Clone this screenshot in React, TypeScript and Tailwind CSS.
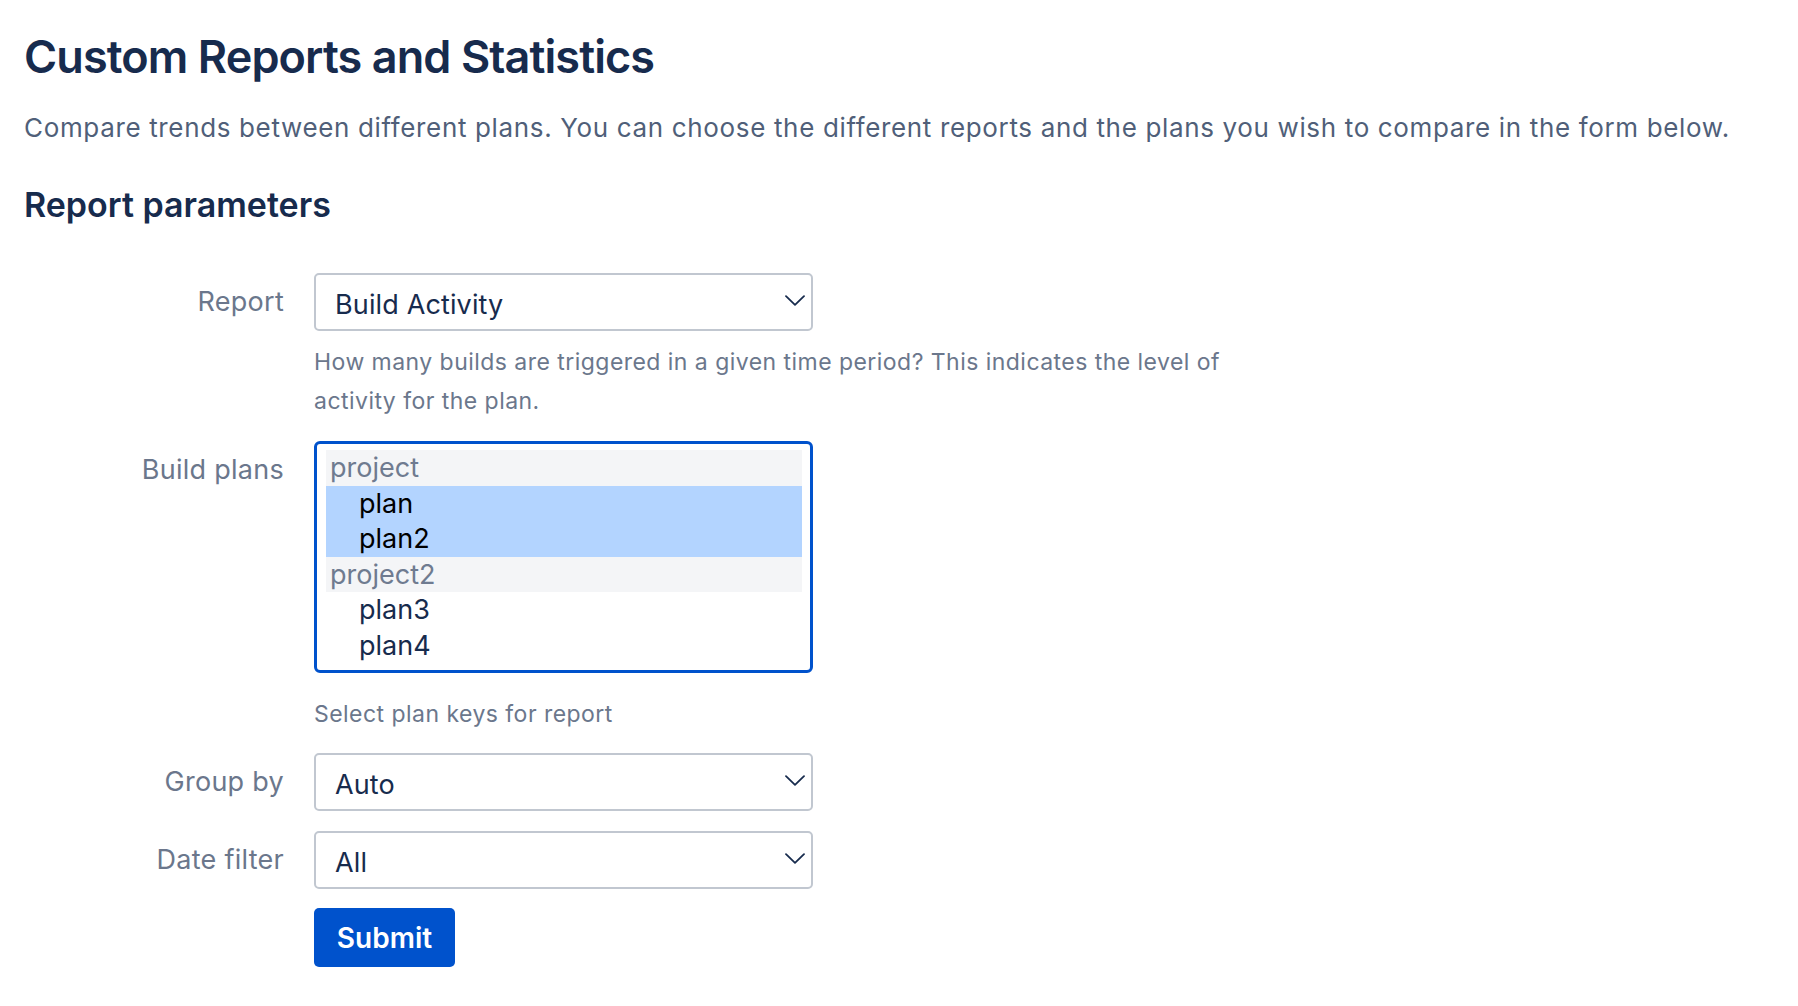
// ─── Types ────────────────────────────────────────────────────────────────────

interface PlanGroup {
  project: string;
  plans: { key: string; selected: boolean }[];
}

// ─── Constants ─────────────────────────────────────────────────────────────────

const groups: PlanGroup[] = [
  {
    project: 'project',
    plans: [
      { key: 'plan', selected: true },
      { key: 'plan2', selected: true },
    ],
  },
  {
    project: 'project2',
    plans: [
      { key: 'plan3', selected: false },
      { key: 'plan4', selected: false },
    ],
  },
];

// ─── Sub-components ────────────────────────────────────────────────────────────

function FieldLabel({ children }: { children: React.ReactNode }) {
  return (
    <div className="w-[260px] shrink-0 text-right text-[27px] leading-[58px] tracking-[0.01em] text-[#6b778c]">
      {children}
    </div>
  );
}

function Chevron() {
  return (
    <svg width="20" height="11" viewBox="0 0 20 11" fill="none" className="mb-[10px]">
      <path d="M1 1.2 10 9.8 19 1.2" stroke="#172b4d" strokeWidth="1.8" strokeLinecap="round" strokeLinejoin="round" />
    </svg>
  );
}

function SelectBox({ value }: { value: string }) {
  return (
    <div className="flex h-[58px] w-[499px] items-center justify-between rounded-[5px] border-2 border-[#c1c7d0] bg-white pt-[6px] pl-[19px] pr-[6px]">
      <span className="text-[27px] leading-[34px] tracking-[0.005em] text-[#172b4d]">{value}</span>
      <Chevron />
    </div>
  );
}

function PlanList() {
  return (
    <div className="h-[232px] w-[499px] rounded-[6px] border-[3px] border-[#0052cc] bg-white pt-[6px] pr-[8px] pl-[9px]">
      {groups.map((g) => (
        <div key={g.project}>
          <div className="h-[35.5px] bg-[#f4f5f7] pl-[4px] text-[27px] leading-[35px] text-[#6f7b90]">
            {g.project}
          </div>
          {g.plans.map((p) => (
            <div
              key={p.key}
              className={`h-[35.5px] pl-[33px] text-[27px] leading-[35px] ${
                p.selected ? 'bg-[#b3d4ff] text-black' : 'text-[#172b4d]'
              }`}
            >
              {p.key}
            </div>
          ))}
        </div>
      ))}
    </div>
  );
}

// ─── App ──────────────────────────────────────────────────────────────────────

export default function App() {
  return (
    <div className="min-h-screen w-full bg-white pt-[28px] pl-[24px] font-['Inter','Noto_Sans',sans-serif]">
      <h1 className="text-[45px] leading-[58px] font-semibold tracking-[-0.02em] text-[#172b4d]">
        Custom Reports and Statistics
      </h1>
      <p className="mt-[23px] text-[26px] leading-[37px] tracking-[0.025em] text-[#505f79]">
        Compare trends between different plans. You can choose the different reports and the plans
        you wish to compare in the form below.
      </p>
      <h2 className="mt-[39px] text-[34px] leading-[40px] font-semibold text-[#172b4d]">
        Report parameters
      </h2>

      <form className="mt-[48px] flex flex-col">
        {/* ── Report ── */}
        <div className="flex gap-[30px]">
          <FieldLabel>Report</FieldLabel>
          <div className="flex flex-col">
            <SelectBox value="Build Activity" />
            <p className="mt-[12px] max-w-[950px] text-[23px] leading-[39px] tracking-[0.02em] text-[#6b778c]">
              How many builds are triggered in a given time period? This indicates the level of
              activity for the plan.
            </p>
          </div>
        </div>

        {/* ── Build plans ── */}
        <div className="mt-[20px] flex gap-[30px]">
          <FieldLabel>Build plans</FieldLabel>
          <div className="flex flex-col">
            <PlanList />
            <p className="mt-[22px] text-[23px] leading-[39px] tracking-[0.02em] text-[#6b778c]">
              Select plan keys for report
            </p>
          </div>
        </div>

        {/* ── Group by / Date filter ── */}
        <div className="mt-[19px] flex gap-[30px]">
          <FieldLabel>Group by</FieldLabel>
          <SelectBox value="Auto" />
        </div>
        <div className="mt-[20px] flex gap-[30px]">
          <FieldLabel>Date filter</FieldLabel>
          <SelectBox value="All" />
        </div>

        <div className="mt-[19px] flex gap-[30px]">
          <div className="w-[260px] shrink-0" />
          <button
            type="button"
            className="h-[59px] w-[141px] rounded-[5px] bg-[#0052cc] text-[28px] font-semibold text-white"
          >
            Submit
          </button>
        </div>
      </form>
    </div>
  );
}
